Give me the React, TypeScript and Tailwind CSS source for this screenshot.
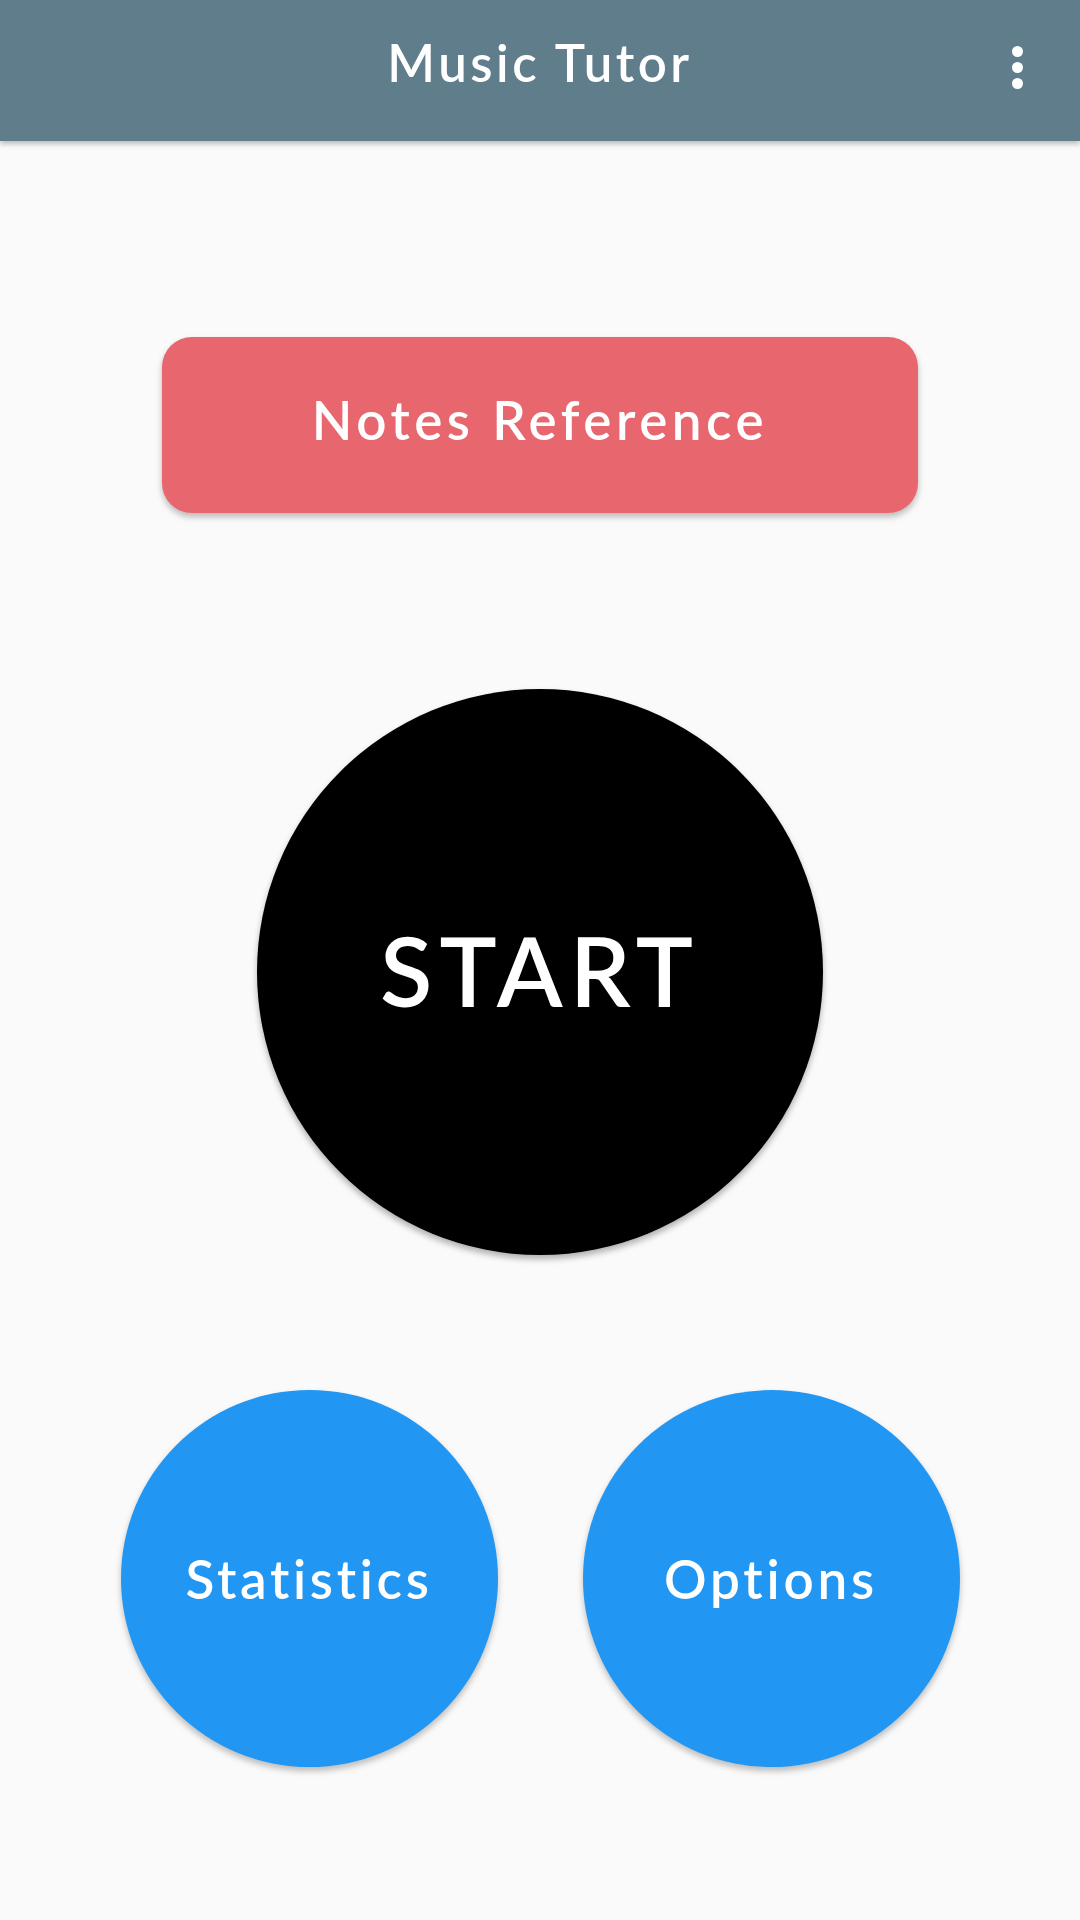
export default function App() {
  return (
    <div className="min-h-[1920px] w-[1080px] bg-[#fafafa] flex flex-col items-center font-['Lato',sans-serif]">
      <header className="relative w-full h-[141px] bg-[#607d8b] shadow-[0_3px_5px_rgba(0,0,0,0.25)] flex items-center justify-center">
        <h1 className="text-white text-[51px] leading-none font-semibold tracking-[3.5px] -mt-[16px]">
          Music Tutor
        </h1>
        <button className="absolute right-[57px] top-[46px] flex flex-col items-center gap-[5px]">
          <span className="w-[11px] h-[11px] rounded-full bg-white" />
          <span className="w-[11px] h-[11px] rounded-full bg-white" />
          <span className="w-[11px] h-[11px] rounded-full bg-white" />
        </button>
      </header>

      <button className="mt-[196px] w-[756px] h-[176px] pb-[12px] rounded-[30px] bg-[#e8666e] shadow-[0_4px_6px_rgba(0,0,0,0.25)] text-white text-[53px] font-semibold leading-none tracking-[4.5px]">
        Notes Reference
      </button>

      <button className="mt-[176px] w-[566px] h-[566px] pb-[4px] rounded-full bg-black shadow-[0_4px_6px_rgba(0,0,0,0.3)] text-white text-[96px] font-semibold leading-none tracking-[7px]">
        START
      </button>

      <div className="mt-[135px] flex gap-[85px]">
        <button className="w-[377px] h-[377px] rounded-full bg-[#2196f3] shadow-[0_4px_6px_rgba(0,0,0,0.25)] text-white text-[53px] font-semibold leading-none tracking-[3.7px]">
          Statistics
        </button>
        <button className="w-[377px] h-[377px] rounded-full bg-[#2196f3] shadow-[0_4px_6px_rgba(0,0,0,0.25)] text-white text-[53px] font-semibold leading-none tracking-[3.8px]">
          Options
        </button>
      </div>
    </div>
  );
}
